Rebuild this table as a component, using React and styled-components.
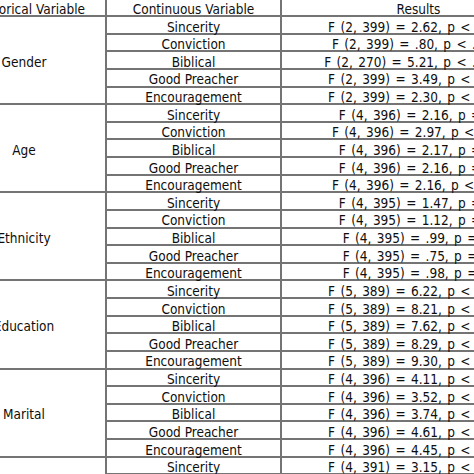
import React from "react";
import styled, { createGlobalStyle } from "styled-components";

const Global = createGlobalStyle`
  html, body { margin: 0; padding: 0; background: #fff; overflow: hidden; }
  body { width: 474px; height: 474px; }
`;

const Frame = styled.div`
  width: 474px;
  height: 474px;
  overflow: hidden;
  background: #fff;
`;

const Grid = styled.div`
  display: grid;
  grid-template-columns: 162px 173px 273px;
  grid-auto-rows: 15.635px;
  gap: 2px;
  padding: 2px;
  background: #747474;
  margin: -2.6px 0 0 -59px;
  width: max-content;
  font-family: "DejaVu Sans Condensed", "DejaVu Sans", sans-serif;
  font-stretch: condensed;
  font-size: 13.5px;
  color: #0e0e0e;
`;

const Cell = styled.div`
  background: #fff;
  display: flex;
  align-items: center;
  justify-content: center;
  box-sizing: border-box;
  padding-top: 5px;
  white-space: nowrap;
  line-height: 1;
  word-spacing: ${(p) => (p.$numeric ? "1.5px" : "0")};
  grid-row: ${(p) => (p.$span ? `span ${p.$span}` : "auto")};
`;

const groups = [
  {
    name: "Gender",
    rows: [
      ["Sincerity", "F (2, 399) = 2.62, p < .001*"],
      ["Conviction", "F (2, 399) = .80, p < .001*"],
      ["Biblical", "F (2, 270) = 5.21, p < .0001*"],
      ["Good Preacher", "F (2, 399) = 3.49, p < .001*"],
      ["Encouragement", "F (2, 399) = 2.30, p < .001*"],
    ],
  },
  {
    name: "Age",
    rows: [
      ["Sincerity", "F (4, 396) = 2.16, p = .1"],
      ["Conviction", "F (4, 396) = 2.97, p < .01*"],
      ["Biblical", "F (4, 396) = 2.17, p = .1"],
      ["Good Preacher", "F (4, 396) = 2.16, p = .1"],
      ["Encouragement", "F (4, 396) = 2.16, p < .05*"],
    ],
  },
  {
    name: "Ethnicity",
    rows: [
      ["Sincerity", "F (4, 395) = 1.47, p = .2"],
      ["Conviction", "F (4, 395) = 1.12, p = .3"],
      ["Biblical", "F (4, 395) = .99, p = .4"],
      ["Good Preacher", "F (4, 395) = .75, p = .6"],
      ["Encouragement", "F (4, 395) = .98, p = .4"],
    ],
  },
  {
    name: "Education",
    rows: [
      ["Sincerity", "F (5, 389) = 6.22, p < .001*"],
      ["Conviction", "F (5, 389) = 8.21, p < .001*"],
      ["Biblical", "F (5, 389) = 7.62, p < .001*"],
      ["Good Preacher", "F (5, 389) = 8.29, p < .001*"],
      ["Encouragement", "F (5, 389) = 9.30, p < .001*"],
    ],
  },
  {
    name: "Marital",
    rows: [
      ["Sincerity", "F (4, 396) = 4.11, p < .001*"],
      ["Conviction", "F (4, 396) = 3.52, p < .001*"],
      ["Biblical", "F (4, 396) = 3.74, p < .001*"],
      ["Good Preacher", "F (4, 396) = 4.61, p < .001*"],
      ["Encouragement", "F (4, 396) = 4.45, p < .001*"],
    ],
  },
  {
    name: "Church",
    rows: [
      ["Sincerity", "F (4, 391) = 3.15, p < .001*"],
      ["Conviction", "F (4, 391) = 2.88, p < .001*"],
      ["Biblical", "F (4, 391) = 3.02, p < .001*"],
      ["Good Preacher", "F (4, 391) = 3.41, p < .001*"],
      ["Encouragement", "F (4, 391) = 3.27, p < .001*"],
    ],
  },
];

export default function App() {
  return (
    <Frame>
      <Global />
      <Grid>
        <Cell>Categorical Variable</Cell>
        <Cell>Continuous Variable</Cell>
        <Cell>Results</Cell>
        {groups.map((g) => (
          <React.Fragment key={g.name}>
            <Cell $span={g.rows.length}>{g.name}</Cell>
            {g.rows.map(([v, r], i) => (
              <React.Fragment key={g.name + i}>
                <Cell>{v}</Cell>
                <Cell $numeric>{r}</Cell>
              </React.Fragment>
            ))}
          </React.Fragment>
        ))}
      </Grid>
    </Frame>
  );
}
